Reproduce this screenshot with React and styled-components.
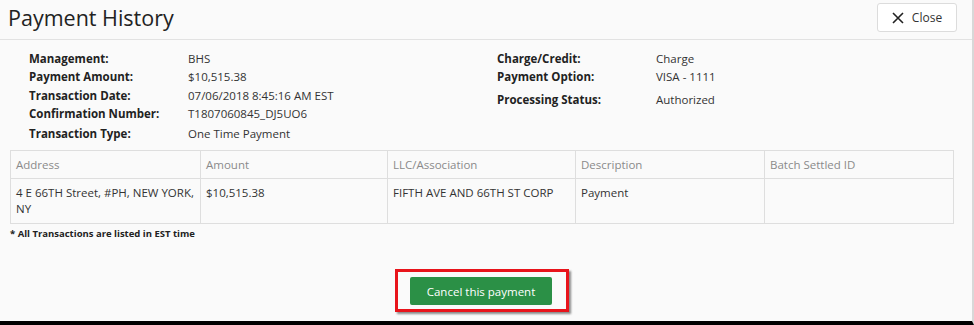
import React from "react";
import styled, { createGlobalStyle } from "styled-components";

const Global = createGlobalStyle`
  html, body { margin: 0; padding: 0; background: #fafafa; }
  body { font-family: "Open Sans", "Noto Sans", sans-serif; color: #333; }
`;

const Page = styled.div`
  width: 972px;
  height: 321px;
  border-right: 2px solid #d8d8d8;
  border-bottom: 4px solid #000;
  background: #fafafa;
  display: flex;
  flex-direction: column;
`;

const Header = styled.div`
  height: 39px;
  border-bottom: 1px solid #e2e2e2;
  display: flex;
  align-items: flex-start;
  justify-content: space-between;
  padding: 0 15px 0 8px;
`;

const Title = styled.h1`
  margin: 3px 0 0;
  font-size: 21.5px;
  font-weight: 400;
  color: #222;
`;

const CloseBtn = styled.button`
  margin-top: 3px;
  width: 80px;
  height: 29px;
  border: 1px solid #dcdcdc;
  border-radius: 3px;
  background: #fff;
  display: flex;
  align-items: center;
  justify-content: center;
  gap: 8px;
  font-family: inherit;
  font-size: 12px;
  color: #333;
  padding: 0;
`;

const Details = styled.div`
  display: grid;
  grid-template-columns: 468px 1fr;
  padding: 9px 0 0 29px;
`;

const Col = styled.div`
  display: flex;
  flex-direction: column;
`;

const Row = styled.div`
  display: grid;
  grid-template-columns: 159px 1fr;
  height: ${(p) => p.h}px;
  align-items: center;
  font-size: 11.5px;
`;

const Label = styled.span`
  font-weight: 700;
  color: #222;
`;

const Value = styled.span`
  color: #333;
`;

const Table = styled.table`
  margin: 6px 0 0 10px;
  width: 944px;
  border-collapse: collapse;
  font-size: 11.5px;
  td, th {
    border: 1px solid #dedede;
    text-align: left;
    vertical-align: top;
    padding: 6px 5px;
  }
  th {
    font-weight: 400;
    color: #8a8a8a;
    height: 15px;
    line-height: 15px;
  }
  td {
    color: #333;
    height: 32px;
    line-height: 16px;
  }
`;

const Note = styled.div`
  margin: 3px 0 0 10px;
  font-size: 9.5px;
  font-weight: 700;
  color: #222;
`;

const Footer = styled.div`
  display: flex;
  justify-content: center;
  padding-top: 29px;
  padding-right: 8px;
`;

const Highlight = styled.div`
  border: 3px solid #e8141b;
  box-shadow: 2px 2px 2px rgba(0,0,0,0.45);
  padding: 5px 14px 4px 12px;
`;

const GreenBtn = styled.button`
  width: 142px;
  height: 28px;
  border: none;
  border-radius: 2px;
  background: #2b9046;
  color: #fff;
  font-family: inherit;
  font-size: 11.5px;
  padding: 0;
`;

const left = [
  ["Management:", "BHS", 18],
  ["Payment Amount:", "$10,515.38", 19],
  ["Transaction Date:", "07/06/2018 8:45:16 AM EST", 18],
  ["Confirmation Number:", "T1807060845_DJ5UO6", 19],
  ["Transaction Type:", "One Time Payment", 21],
];
const right = [
  ["Charge/Credit:", "Charge", 18],
  ["Payment Option:", "VISA - 1111", 19],
  ["Processing Status:", "Authorized", 26],
];

export default function App() {
  return (
    <>
      <Global />
      <Page>
        <Header>
          <Title>Payment History</Title>
          <CloseBtn>
            <svg width="12" height="12" viewBox="0 0 12 12">
              <path d="M1 1 L11 11 M11 1 L1 11" stroke="#222" strokeWidth="1.6" />
            </svg>
            Close
          </CloseBtn>
        </Header>
        <Details>
          <Col>
            {left.map(([l, v, h]) => (
              <Row key={l} h={h}>
                <Label>{l}</Label>
                <Value>{v}</Value>
              </Row>
            ))}
          </Col>
          <Col>
            {right.map(([l, v, h]) => (
              <Row key={l} h={h}>
                <Label>{l}</Label>
                <Value>{v}</Value>
              </Row>
            ))}
          </Col>
        </Details>
        <Table>
          <colgroup>
            <col style={{ width: 190 }} />
            <col style={{ width: 187 }} />
            <col style={{ width: 188 }} />
            <col style={{ width: 189 }} />
            <col />
          </colgroup>
          <thead>
            <tr>
              <th>Address</th>
              <th>Amount</th>
              <th>LLC/Association</th>
              <th>Description</th>
              <th>Batch Settled ID</th>
            </tr>
          </thead>
          <tbody>
            <tr>
              <td>4 E 66TH Street, #PH, NEW YORK, NY</td>
              <td>$10,515.38</td>
              <td>FIFTH AVE AND 66TH ST CORP</td>
              <td>Payment</td>
              <td></td>
            </tr>
          </tbody>
        </Table>
        <Note>* All Transactions are listed in EST time</Note>
        <Footer>
          <Highlight>
            <GreenBtn>Cancel this payment</GreenBtn>
          </Highlight>
        </Footer>
      </Page>
    </>
  );
}
